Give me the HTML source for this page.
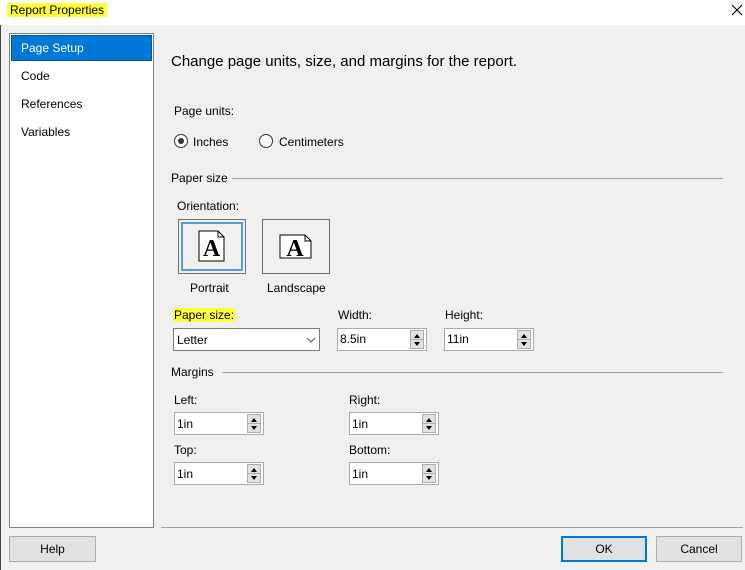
<!DOCTYPE html>
<html><head><meta charset="utf-8"><style>
*{box-sizing:border-box;margin:0;padding:0}
body{width:745px;height:570px;background:#f0f0f0;font-family:"Liberation Sans",sans-serif;font-size:12px;color:#000;position:relative;overflow:hidden}
.a{position:absolute;white-space:nowrap}
.t{line-height:14px}
.box{position:absolute;background:#fff;border:1px solid #7a7a7a}
.spin{position:absolute;right:2px;top:1px;width:14px;height:19px;border:1px solid #adadad;background:#e1e1e1}
.spin:before{content:"";position:absolute;left:3px;top:3px;border:3px solid transparent;border-bottom:4px solid #000;border-top:0}
.spin:after{content:"";position:absolute;left:3px;top:11px;border:3px solid transparent;border-top:4px solid #000;border-bottom:0}
.spin i{position:absolute;left:0;right:0;top:8px;border-top:1px solid #adadad}
.hl{background:#ffff3a}
.btn{position:absolute;background:#e1e1e1;border:1px solid #adadad;text-align:center;line-height:24px}
.line{position:absolute;height:1px;background:#a0a0a0}
</style></head><body>
<div class="a" style="left:0;top:0;width:745px;height:25px;background:#fff"></div>
<div class="a" style="left:0;top:25px;width:1px;height:545px;background:#444"></div>
<div class="a t hl" style="left:7px;top:3px;padding:0 3px">Report Properties</div>
<svg class="a" style="left:731px;top:4px" width="12" height="12"><path d="M1 1L11 11M11 1L1 11" stroke="#000" stroke-width="1.1"/></svg>

<div class="box" style="left:9px;top:33px;width:145px;height:495px;border-color:#828282"></div>
<div class="a" style="left:11px;top:35px;width:141px;height:26px;background:#0078d7;border:1px dotted #003a70"></div>
<div class="a t" style="left:21px;top:41px;color:#fff">Page Setup</div>
<div class="a t" style="left:21px;top:69px">Code</div>
<div class="a t" style="left:21px;top:97px">References</div>
<div class="a t" style="left:21px;top:125px">Variables</div>

<div class="a" style="left:171px;top:53px;font-size:15px;line-height:18px">Change page units, size, and margins for the report.</div>
<div class="a t" style="left:174px;top:104px">Page units:</div>
<div class="a" style="left:174px;top:134px;width:14px;height:14px;border:1px solid #333;border-radius:50%;background:#fff"></div>
<div class="a" style="left:178px;top:138px;width:6px;height:6px;border-radius:50%;background:#333"></div>
<div class="a t" style="left:193px;top:135px">Inches</div>
<div class="a" style="left:259px;top:134px;width:14px;height:14px;border:1px solid #333;border-radius:50%;background:#fff"></div>
<div class="a t" style="left:279px;top:135px">Centimeters</div>

<div class="a t" style="left:171px;top:171px">Paper size</div>
<div class="line" style="left:232px;top:178px;width:491px"></div>
<div class="a t" style="left:177px;top:199px">Orientation:</div>
<div class="a" style="left:178px;top:219px;width:68px;height:55px;border:1px solid #707070;background:#f0f0f0"><div style="position:absolute;inset:2px;border:2px solid #5b9bd5"></div></div>
<div class="a" style="left:262px;top:219px;width:68px;height:55px;border:1px solid #707070"></div>
<svg class="a" style="left:198px;top:230px" width="28" height="33"><path d="M1 1H20L26 7V31H1Z" fill="#fff" stroke="#000"/><path d="M20 1V7H26" fill="none" stroke="#000"/><text x="13.5" y="26" text-anchor="middle" font-family="Liberation Serif" font-weight="bold" font-size="24">A</text></svg>
<svg class="a" style="left:279px;top:234px" width="34" height="26"><path d="M1 1H26L32 7V24H1Z" fill="#fff" stroke="#000"/><path d="M26 1V7H32" fill="none" stroke="#000"/><text x="16" y="22" text-anchor="middle" font-family="Liberation Serif" font-weight="bold" font-size="24">A</text></svg>
<div class="a t" style="left:190px;top:281px">Portrait</div>
<div class="a t" style="left:267px;top:281px">Landscape</div>

<div class="a t hl" style="left:173px;top:308px;padding:0 1px">Paper size:</div>
<div class="box" style="left:173px;top:328px;width:147px;height:23px"><span class="a t" style="left:3px;top:4px">Letter</span><svg class="a" style="left:132px;top:8px" width="10" height="6"><path d="M1 1L5 5L9 1" fill="none" stroke="#555"/></svg></div>
<div class="a t" style="left:338px;top:308px">Width:</div>
<div class="box" style="left:337px;top:328px;width:90px;height:23px;border-color:#aaa"><span class="a t" style="left:2px;top:3px">8.5in</span><div class="spin"><i></i></div></div>
<div class="a t" style="left:445px;top:308px">Height:</div>
<div class="box" style="left:444px;top:328px;width:90px;height:23px;border-color:#aaa"><span class="a t" style="left:2px;top:3px">11in</span><div class="spin"><i></i></div></div>

<div class="a t" style="left:171px;top:365px">Margins</div>
<div class="line" style="left:222px;top:372px;width:501px"></div>
<div class="a t" style="left:174px;top:393px">Left:</div>
<div class="box" style="left:174px;top:412px;width:90px;height:23px;border-color:#aaa"><span class="a t" style="left:2px;top:4px">1in</span><div class="spin"><i></i></div></div>
<div class="a t" style="left:349px;top:393px">Right:</div>
<div class="box" style="left:349px;top:412px;width:90px;height:23px;border-color:#aaa"><span class="a t" style="left:2px;top:4px">1in</span><div class="spin"><i></i></div></div>
<div class="a t" style="left:174px;top:443px">Top:</div>
<div class="box" style="left:174px;top:462px;width:90px;height:23px;border-color:#aaa"><span class="a t" style="left:2px;top:4px">1in</span><div class="spin"><i></i></div></div>
<div class="a t" style="left:349px;top:443px">Bottom:</div>
<div class="box" style="left:349px;top:462px;width:90px;height:23px;border-color:#aaa"><span class="a t" style="left:2px;top:4px">1in</span><div class="spin"><i></i></div></div>

<div class="line" style="left:161px;top:527px;width:582px"></div>
<div class="btn" style="left:9px;top:536px;width:87px;height:26px">Help</div>
<div class="btn" style="left:561px;top:536px;width:86px;height:26px;border:2px solid #0078d7;line-height:22px">OK</div>
<div class="btn" style="left:656px;top:536px;width:86px;height:26px">Cancel</div>
</body></html>
